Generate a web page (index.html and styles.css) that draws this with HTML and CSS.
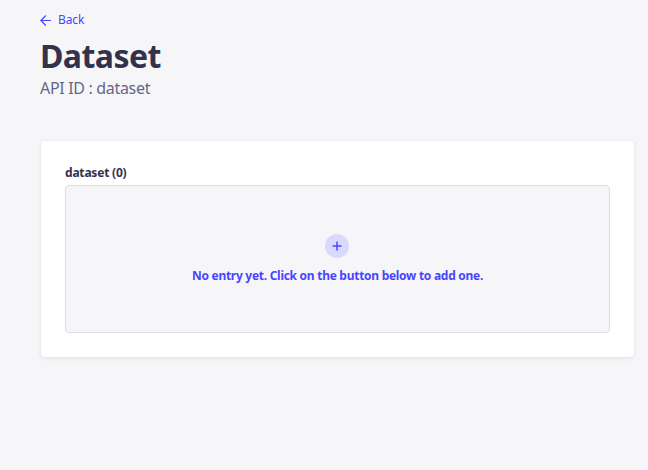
FILE: index.html
```html
<!DOCTYPE html>
<html lang="en">
<head>
<meta charset="utf-8">
<title>Dataset</title>
<link rel="stylesheet" href="styles.css">
</head>
<body>
<main class="page">
  <header class="header">
    <a class="back" href="#">
      <svg class="back-icon" viewBox="0 0 24 24" aria-hidden="true"><path d="M24 13.3H5.1l8.6 8.6-1.9 1.9L0 12 11.8.2l1.9 1.9-8.6 8.6H24z"/></svg>
      <span>Back</span>
    </a>
    <h1 class="title">Dataset</h1>
    <p class="subtitle">API ID : dataset</p>
  </header>
  <section class="card">
    <div class="label">dataset (0)</div>
    <div class="empty">
      <span class="add">
        <svg viewBox="0 0 24 24" aria-hidden="true"><path d="M13.5 3h-3v7.5H3v3h7.5V21h3v-7.5H21v-3h-7.5z"/></svg>
      </span>
      <p class="empty-text">No entry yet. Click on the button below to add one.</p>
    </div>
  </section>
</main>
</body>
</html>
```
FILE: styles.css
```css
* { box-sizing: border-box; }
html, body { margin: 0; height: 100%; }
body {
  background: #f6f6f9;
  font-family: "Noto Sans", "Open Sans", sans-serif;
  overflow: hidden;
}
.page { padding: 12px 14px 0 40px; }
.header { display: flex; flex-direction: column; align-items: flex-start; }
.back {
  display: flex;
  align-items: center;
  gap: 7px;
  height: 16px;
  color: #4945ff;
  font-size: 12px;
  line-height: 16px;
  letter-spacing: -0.1px;
  text-decoration: none;
}
.back-icon { width: 11px; height: 11px; fill: #4945ff; }
.title {
  margin: 8px 0 0;
  color: #32324d;
  font-size: 32px;
  line-height: 40px;
  font-weight: 700;
  letter-spacing: -0.55px;
}
.subtitle {
  margin: 0;
  color: #666687;
  font-size: 16px;
  line-height: 24px;
  letter-spacing: -0.32px;
}
.card {
  margin: 41px 0 0 1px;
  height: 216px;
  padding: 24px;
  background: #fff;
  border-radius: 4px;
  box-shadow: 0 1px 4px rgba(33, 33, 52, 0.1);
}
.label {
  color: #32324d;
  font-size: 12px;
  line-height: 16px;
  font-weight: 700;
  letter-spacing: -0.2px;
}
.empty {
  margin-top: 4px;
  height: 148px;
  display: flex;
  flex-direction: column;
  align-items: center;
  padding-top: 48px;
  background: #f6f6f9;
  border: 1px solid #dcdce4;
  border-radius: 4px;
}
.add {
  width: 24px;
  height: 24px;
  margin-right: 1px;
  display: flex;
  align-items: center;
  justify-content: center;
  background: #d9d8ff;
  border-radius: 50%;
}
.add svg { width: 12px; height: 12px; fill: #4945ff; }
.empty-text {
  margin: 10px 0 0;
  color: #4945ff;
  font-size: 12px;
  line-height: 16px;
  font-weight: 700;
  letter-spacing: -0.28px;
}
```
